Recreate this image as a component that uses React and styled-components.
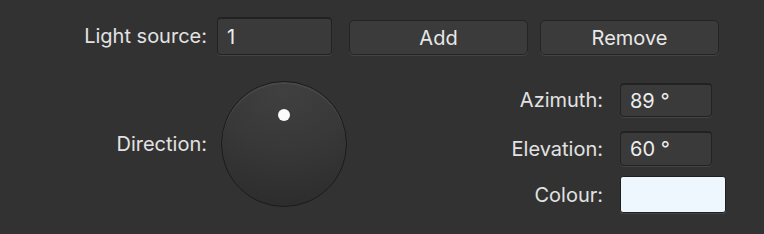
import React from "react";
import styled, { createGlobalStyle } from "styled-components";

const GlobalStyle = createGlobalStyle`
  html, body {
    margin: 0;
    padding: 0;
    background: #323232;
  }
  body {
    font-family: Inter, "Noto Sans", "Liberation Sans", sans-serif;
    color: #e4e4e4;
    -webkit-font-smoothing: antialiased;
  }
`;

const Panel = styled.div`
  width: 764px;
  height: 234px;
  box-sizing: border-box;
  padding-top: 17px;
  background: #323232;
  overflow: hidden;
`;

const TopRow = styled.div`
  display: flex;
  align-items: center;
`;

const Label = styled.div`
  width: ${(p) => p.$width || 207}px;
  flex-shrink: 0;
  text-align: right;
  font-size: 20px;
  color: #e2e2e2;
  white-space: nowrap;
`;

const Field = styled.div`
  box-sizing: border-box;
  width: ${(p) => p.$width}px;
  height: ${(p) => p.$height}px;
  margin-left: ${(p) => p.$gap || 0}px;
  padding-left: 9px;
  display: flex;
  align-items: center;
  background: #3a3a3a;
  border: 1px solid #222222;
  border-top-width: 2px;
  border-radius: 4px;
  box-shadow: 0 1px 0 #444444;
  font-size: 20px;
  color: #ededed;
`;

const Button = styled.button`
  box-sizing: border-box;
  width: ${(p) => p.$width}px;
  height: 35px;
  margin-left: ${(p) => p.$gap}px;
  margin-top: 3px;
  background: #3b3b3b;
  border: 1px solid #242424;
  border-radius: 5px;
  box-shadow: 0 1px 0 #444444;
  font-family: inherit;
  font-size: 20px;
  color: #e8e8e8;
  padding: 0;
`;

const Lower = styled.div`
  display: flex;
  align-items: flex-start;
  margin-top: 26px;
`;

const DirectionGroup = styled.div`
  display: flex;
  align-items: center;
`;

const Knob = styled.div`
  position: relative;
  width: 126px;
  height: 126px;
  margin-left: 14px;
  box-sizing: border-box;
  border-radius: 50%;
  border: 1.5px solid #1b1b1b;
  background: radial-gradient(
    ellipse 110% 90% at 50% 8%,
    #404040 0%,
    #383838 50%,
    #2d2d2d 100%
  );
  box-shadow: inset 0 2px 1px rgba(255, 255, 255, 0.06);
`;

const Dot = styled.span`
  position: absolute;
  left: 50%;
  top: 27px;
  width: 12px;
  height: 12px;
  margin-left: -6px;
  border-radius: 50%;
  background: #fbfbfb;
`;

const Settings = styled.div`
  margin-left: auto;
  margin-right: 37px;
  padding-top: 2px;
  display: flex;
  flex-direction: column;
`;

const SettingRow = styled.div`
  display: flex;
  align-items: center;
  justify-content: flex-end;
  margin-top: ${(p) => p.$top || 0}px;
`;

const FieldSlot = styled.div`
  width: 107px;
  margin-left: 17px;
  display: flex;
`;

const Swatch = styled.div`
  box-sizing: border-box;
  width: 106px;
  height: 37px;
  background: #eef7fe;
  border: 1px solid #1f1f1f;
  border-radius: 3px;
  box-shadow: 0 1px 0 #444444;
`;

export default function App() {
  return (
    <Panel>
      <GlobalStyle />
      <TopRow>
        <Label>Light source:</Label>
        <Field $width={115} $height={38} $gap={10}>
          1
        </Field>
        <Button $width={179} $gap={17}>
          Add
        </Button>
        <Button $width={179} $gap={12}>
          Remove
        </Button>
      </TopRow>
      <Lower>
        <DirectionGroup>
          <Label $width={207}>Direction:</Label>
          <Knob>
            <Dot />
          </Knob>
        </DirectionGroup>
        <Settings>
          <SettingRow>
            <Label $width={120}>Azimuth:</Label>
            <FieldSlot>
              <Field $width={92} $height={34}>89 °</Field>
            </FieldSlot>
          </SettingRow>
          <SettingRow $top={14}>
            <Label $width={120}>Elevation:</Label>
            <FieldSlot>
              <Field $width={92} $height={35}>60 °</Field>
            </FieldSlot>
          </SettingRow>
          <SettingRow $top={10}>
            <Label $width={120}>Colour:</Label>
            <FieldSlot>
              <Swatch />
            </FieldSlot>
          </SettingRow>
        </Settings>
      </Lower>
    </Panel>
  );
}
